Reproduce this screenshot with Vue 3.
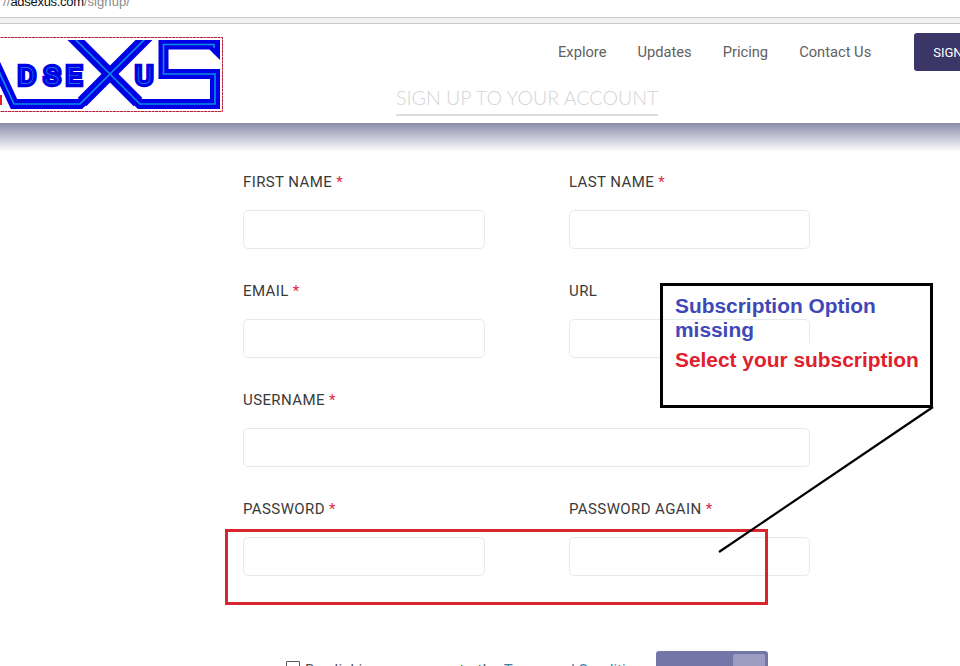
<script setup>
const fields = [
  { label: 'FIRST NAME', required: true },
  { label: 'LAST NAME', required: true },
  { label: 'EMAIL', required: true },
  { label: 'URL', required: false },
  { label: 'USERNAME', required: true, wide: true },
  { label: 'PASSWORD', required: true },
  { label: 'PASSWORD AGAIN', required: true },
]
const links = ['Explore', 'Updates', 'Pricing', 'Contact Us']
</script>

<template>
  <div class="page">
    <div class="address"><span class="url">//<b>adsexus.com</b>/signup/</span></div>
    <div class="strip"></div>

    <header class="header">
      <svg class="logo" viewBox="-2 37 225 75" width="225" height="75" role="img" aria-label="AdseXuS logo">
        <defs>
          <clipPath id="logoClip"><rect x="-2" y="40" width="222" height="69" /></clipPath>
        </defs>
        <rect x="-10" y="37.5" width="232.5" height="74" fill="#fff" stroke="#b4213f" stroke-width="1" stroke-dasharray="3 0.5" />
        <rect x="0" y="95" width="2" height="10" fill="#e0202a" />
        <g clip-path="url(#logoClip)" fill="none" stroke-linejoin="miter">
          <g stroke="#0000e6" stroke-width="10">
            <polyline points="70,34 110,74 140,104 215,104 215,74 163.5,74 163.5,44.5 225,44.5" />
            <polyline points="150,34 110,74 80,104 14,104 -11,50" />
          </g>
          <g stroke="#0000e6" stroke-width="12">
            <line x1="70" y1="34" x2="138" y2="102" />
            <line x1="150" y1="34" x2="82" y2="102" />
          </g>
          <g stroke="#0a90e0" stroke-width="1.6">
            <polyline points="70,34 110,74 140,104 215,104 215,74 163.5,74 163.5,44.5 214,44.5 214,54" />
            <polyline points="150,34 110,74 80,104 14,104 -11,50" />
          </g>
        </g>
        <polygon points="208,48 220,48 220,60" fill="#0000e6" />
        <g class="logo-text">
          <text x="17.7 42.5 63.4" y="84" transform="scale(1.05 1)">DSE</text>
          <text x="129.3" y="84" transform="scale(1.05 1)">U</text>
        </g>
      </svg>

      <div class="header-main">
        <nav class="nav">
          <a v-for="link in links" :key="link" class="nav-link">{{ link }}</a>
          <button class="sign-btn">SIGN IN</button>
        </nav>
        <h1 class="title">SIGN UP TO YOUR ACCOUNT</h1>
      </div>
    </header>

    <div class="fade"></div>

    <main class="form">
      <div v-for="field in fields" :key="field.label" class="field" :class="{ wide: field.wide }">
        <label class="label">{{ field.label }}<span v-if="field.required" class="req"> *</span></label>
        <input class="input" type="text" />
      </div>
      <div class="agree-row">
        <span class="check"></span>
        <span class="agree">By clicking, you agree to the <a class="terms">Terms and Conditions</a></span>
        <button class="submit"><span class="submit-inner"></span></button>
      </div>
    </main>

    <div class="red-box"></div>
    <svg class="pointer" width="960" height="666" viewBox="0 0 960 666">
      <line x1="933" y1="407" x2="719" y2="552" stroke="#000" stroke-width="2.2" />
    </svg>
    <aside class="note">
      <div class="note-title">Subscription Option missing</div>
      <div class="note-sub">Select your subscription</div>
    </aside>
  </div>
</template>

<style scoped>
.page {
  position: relative;
  width: 960px;
  height: 666px;
  overflow: hidden;
  background: #fff;
  font-family: Roboto, "Liberation Sans", sans-serif;
}
.address {
  height: 17px;
  overflow: hidden;
  border-bottom: 1px solid #c9cbca;
}
.url {
  display: block;
  margin-top: -8px;
  padding-left: 3px;
  font: 13px/20px "Liberation Sans", sans-serif;
  letter-spacing: 0.1px;
  color: #8b8b8b;
}
.url b {
  font-weight: 400;
  letter-spacing: -0.3px;
  color: #111;
}
.strip {
  height: 5px;
  background: #f1f1f1;
  border-bottom: 1px solid #c9cbca;
}
.header {
  display: flex;
  height: 99px;
  overflow: hidden;
}
.logo {
  flex: none;
  display: block;
  margin: 13px 0 0 -2px;
}
.header-main {
  flex: none;
  width: 737px;
}
.nav {
  display: flex;
  align-items: center;
  gap: 31px;
  height: 38px;
  margin-top: 9px;
  padding-left: 335px;
}
.nav-link {
  font-size: 14.7px;
  color: #616161;
  white-space: nowrap;
}
.sign-btn {
  flex: none;
  width: 100px;
  height: 38px;
  margin-left: 12px;
  padding: 0 0 0 19px;
  border: 0;
  border-radius: 3px;
  background: #3c3567;
  color: #fff;
  font: 13px Roboto, sans-serif;
  text-align: left;
}
.title {
  display: inline-block;
  margin: 15px 0 0 173px;
  padding-bottom: 5px;
  border-bottom: 2px solid #dedede;
  font: 300 19.6px/23px Lato, "Open Sans", sans-serif;
  color: #d4d4d4;
  white-space: nowrap;
}
.fade {
  height: 29px;
  background: linear-gradient(#8a8cac, #fff);
}
.form {
  display: grid;
  grid-template-columns: 242px 241px;
  column-gap: 84px;
  row-gap: 32px;
  margin: 20px 0 0 243px;
  width: 567px;
}
.field {
  display: flex;
  flex-direction: column;
}
.field.wide {
  grid-column: 1 / -1;
}
.label {
  height: 20px;
  margin-bottom: 18px;
  font-size: 15px;
  line-height: 20px;
  letter-spacing: 0.4px;
  color: #3a3a3a;
}
.req {
  color: #e0283c;
}
.input {
  box-sizing: border-box;
  width: 100%;
  height: 39px;
  border: 1px solid #e6eaee;
  border-radius: 5px;
  background: #fff;
  outline: none;
}
.agree-row {
  grid-column: 1 / -1;
  display: flex;
  align-items: flex-start;
  margin: 43px 0 0 43px;
}
.check {
  flex: none;
  width: 12px;
  height: 12px;
  margin-top: 10px;
  border: 1px solid #555;
  border-radius: 1px;
}
.agree {
  width: 351px;
  margin: 9px 0 0 5px;
  font-size: 15px;
  line-height: 20px;
  letter-spacing: 0.35px;
  color: #555;
  white-space: nowrap;
}
.terms {
  letter-spacing: 0;
  color: #3e7fa8;
}
.submit {
  flex: none;
  box-sizing: border-box;
  width: 112px;
  height: 44px;
  padding: 3px;
  border: 0;
  border-radius: 3px;
  background: #7377a8;
  text-align: right;
}
.submit-inner {
  display: inline-block;
  width: 32px;
  height: 38px;
  border-radius: 2px;
  background: #9a9cc0;
}
.red-box {
  position: absolute;
  left: 225px;
  top: 529px;
  box-sizing: border-box;
  width: 543px;
  height: 76px;
  border: 3px solid #d9252e;
}
.pointer {
  position: absolute;
  left: 0;
  top: 0;
  pointer-events: none;
}
.note {
  position: absolute;
  left: 660px;
  top: 283px;
  box-sizing: border-box;
  display: flex;
  flex-direction: column;
  width: 273px;
  height: 125px;
  border: 3px solid #000;
  font-family: "Liberation Sans", Arial, sans-serif;
  font-weight: 700;
  font-size: 20.9px;
}
.note-title {
  flex: none;
  height: 57px;
  padding: 8px 0 0 12px;
  box-sizing: border-box;
  line-height: 24px;
  color: #4048b8;
}
.note-sub {
  flex: 1;
  padding: 5px 0 0 12px;
  background: #fff;
  line-height: 24px;
  color: #e0202c;
  white-space: nowrap;
}
.logo-text text {
  font: 100 24px Roboto, sans-serif;
  fill: #0a90e0;
  stroke: #0000e6;
  stroke-width: 6.5px;
  stroke-linejoin: miter;
  paint-order: stroke;
}
</style>

<style>
html, body {
  margin: 0;
  background: #fff;
}
</style>
